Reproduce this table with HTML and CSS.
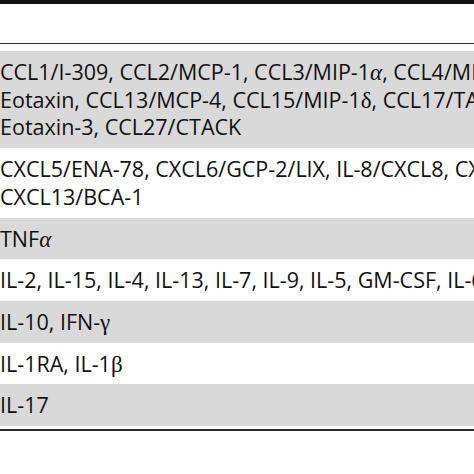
FILE: index.html
```html
<!DOCTYPE html>
<html>
<head>
<meta charset="utf-8">
<link rel="stylesheet" href="styles.css">
</head>
<body>
<div class="table">
  <div class="head"></div>
  <div class="rows">
    <div class="row gray">CCL1/I-309, CCL2/MCP-1, CCL3/MIP-1<span class="greek slant">α</span>, CCL4/MIP-1<span class="greek">β</span>,<br>Eotaxin, CCL13/MCP-4, CCL15/MIP-1<span class="greek">δ</span>, CCL17/TARC,<br>Eotaxin-3, CCL27/CTACK</div>
    <div class="row">CXCL5/ENA-78, CXCL6/GCP-2/LIX, IL-8/CXCL8, CXCL10,<br>CXCL13/BCA-1</div>
    <div class="row gray">TNF<span class="greek slant">α</span></div>
    <div class="row">IL-2, IL-15, IL-4, IL-13, IL-7, IL-9, IL-5, GM-CSF, IL-6</div>
    <div class="row gray">IL-10, IFN-<span class="greek">γ</span></div>
    <div class="row">IL-1RA, IL-1<span class="greek">β</span></div>
    <div class="row gray">IL-17</div>
  </div>
  <div class="foot"></div>
</div>
</body>
</html>
```
FILE: styles.css
```css
html, body {
  margin: 0;
  padding: 0;
  background: #ffffff;
}
body {
  width: 474px;
  height: 474px;
  overflow: hidden;
  font-family: "Open Sans", "Noto Sans", sans-serif;
  color: #111111;
}
.table {
  width: 474px;
}
.head {
  height: 39px;
  border-top: 4px solid #111111;
  border-bottom: 1.5px solid #2a2a2a;
}
.rows {
  padding-top: 7px;
  display: flex;
  flex-direction: column;
}
.row {
  white-space: nowrap;
  overflow: hidden;
  font-size: 21.5px;
  line-height: 27.7px;
  padding: 7px 0 7px 0;
}
.greek {
  font-family: "Liberation Serif", "DejaVu Serif", serif;
  font-size: 23px;
  line-height: 1;
}
.slant {
  font-style: italic;
}
.gray {
  background: #d9d9d9;
}
.foot {
  margin-top: 3px;
  border-top: 2px solid #2a2a2a;
}
```
